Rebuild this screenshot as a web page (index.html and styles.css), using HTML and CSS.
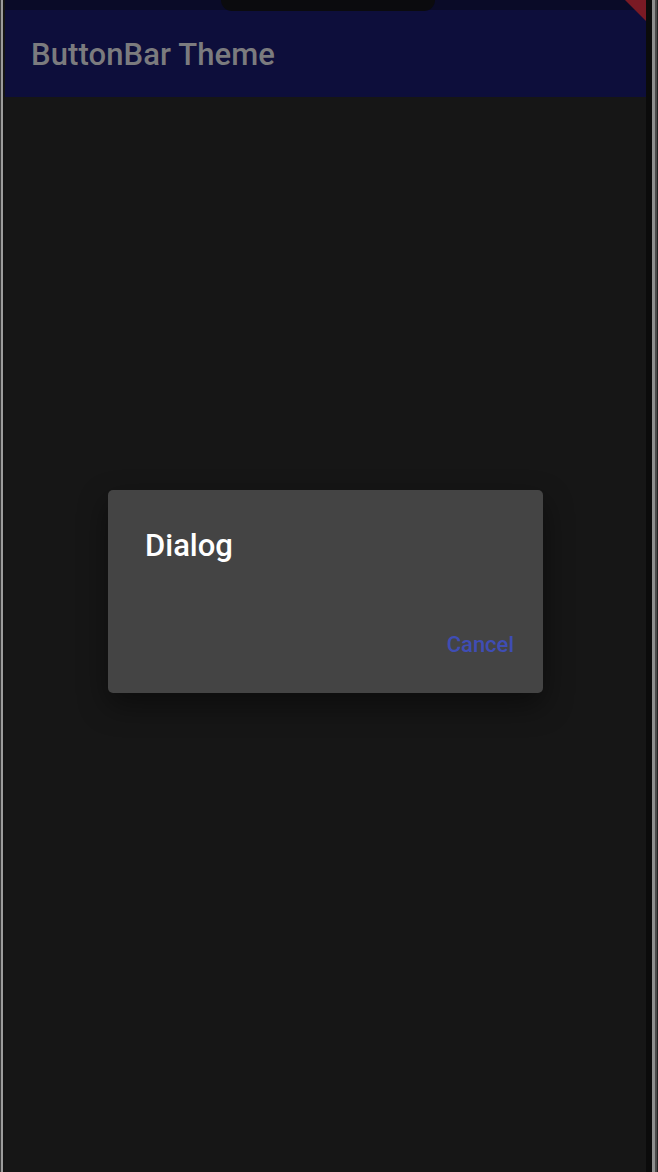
FILE: index.html
```html
<!DOCTYPE html>
<html>
<head>
<meta charset="utf-8">
<link rel="stylesheet" href="styles.css">
</head>
<body>
<div class="device">
  <div class="bezel-left"></div>
  <div class="screen">
    <div class="status-bar">
      <div class="notch"></div>
    </div>
    <div class="app-bar">
      <span class="app-title">ButtonBar Theme</span>
    </div>
    <div class="content"></div>
    <div class="debug-banner"></div>
    <div class="overlay">
      <div class="dialog">
        <div class="dialog-title">Dialog</div>
        <div class="dialog-actions">
          <span class="dialog-button">Cancel</span>
        </div>
      </div>
    </div>
  </div>
  <div class="bezel-right"></div>
</div>
</body>
</html>
```

FILE: styles.css
```css
html, body {
  margin: 0;
  padding: 0;
  background: #161616;
}
body {
  width: 658px;
  height: 1172px;
  overflow: hidden;
  font-family: Roboto, "Noto Sans", sans-serif;
}
.device {
  display: flex;
  width: 658px;
  height: 1172px;
}
.bezel-left {
  width: 5px;
  flex: none;
  background: linear-gradient(to right, #3a3a3a 0, #3a3a3a 1px, #9c9c9c 1px, #9c9c9c 3px, #141414 3px);
}
.bezel-right {
  width: 12px;
  flex: none;
  background: linear-gradient(to right, #0b0b0b 0, #0b0b0b 6px, #8e8e8e 6px, #8e8e8e 9px, #4a4a4a 9px, #4a4a4a 11px, #222 11px);
}
.screen {
  position: relative;
  flex: 1;
  display: flex;
  flex-direction: column;
  background: #161616;
}
.status-bar {
  height: 10px;
  background: #0a0b28;
  display: flex;
  justify-content: center;
}
.notch {
  width: 214px;
  height: 11px;
  margin-left: 4px;
  background: #0b0b0e;
  border-radius: 0 0 28px 28px;
  position: relative;
  z-index: 1;
}
.app-bar {
  height: 87px;
  background: #0d0e3b;
  display: flex;
  align-items: center;
  padding-left: 26px;
  padding-top: 2px;
  box-sizing: border-box;
}
.app-title {
  color: #7b7b7e;
  font-size: 31px;
  font-weight: 500;
  letter-spacing: 0.1px;
}
.content {
  flex: 1;
  background: #161616;
}
.debug-banner {
  position: absolute;
  top: 0;
  right: 0;
  width: 0;
  height: 0;
  border-top: 21px solid #7a1a24;
  border-left: 21px solid transparent;
}
.overlay {
  position: absolute;
  inset: 0;
  display: flex;
  align-items: center;
  justify-content: center;
  padding-top: 11px;
  box-sizing: border-box;
}
.dialog {
  width: 435px;
  height: 203px;
  box-sizing: border-box;
  background: #444444;
  border-radius: 5px;
  box-shadow: 0 12px 30px rgba(0, 0, 0, 0.45);
  display: flex;
  flex-direction: column;
  padding: 34px 29px 0 37px;
}
.dialog-title {
  color: #ffffff;
  font-size: 31px;
  font-weight: 500;
  line-height: 44px;
}
.dialog-actions {
  display: flex;
  justify-content: flex-end;
  margin-top: 63px;
}
.dialog-button {
  color: #3f4db4;
  font-size: 22px;
  font-weight: 500;
  line-height: 28px;
}
```
